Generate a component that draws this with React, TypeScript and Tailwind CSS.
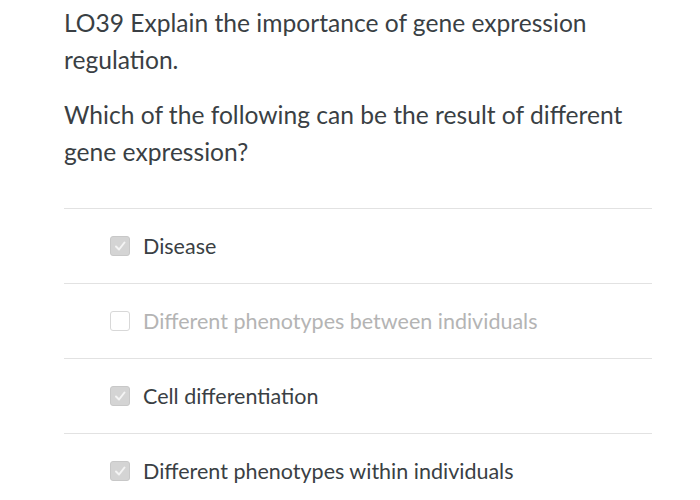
import React from "react";

const Check = ({ checked }: { checked: boolean }) => (
  <div
    className={
      checked
        ? "w-[20px] h-[20px] rounded-[3px] bg-[#d4d4d4] border border-[#c8c8c8] flex items-center justify-center"
        : "w-[20px] h-[20px] rounded-[3px] bg-white border border-[#d8d8d8]"
    }
  >
    {checked && (
      <svg width="14" height="14" viewBox="0 0 14 14">
        <path d="M3 7.5 L6 10.5 L11.5 3.5" fill="none" stroke="#f4f4f4" strokeWidth="2" strokeLinecap="round" strokeLinejoin="round" />
      </svg>
    )}
  </div>
);

const options = [
  { label: "Disease", checked: true },
  { label: "Different phenotypes between individuals", checked: false },
  { label: "Cell differentiation", checked: true },
  { label: "Different phenotypes within individuals", checked: true },
];

export default function App() {
  return (
    <div className="w-[700px] h-[500px] overflow-hidden bg-white" style={{ fontFamily: "Lato, 'Open Sans', sans-serif" }}>
      <div className="pl-[64px] pt-[4px] w-[652px]">
        <p className="text-[24.6px] leading-[37px] text-[#3a3f44]">
          LO39 Explain the importance of gene expression
          <br />
          regulation.
        </p>
        <p className="mt-[18px] text-[24.6px] leading-[37px] text-[#3a3f44]">
          Which of the following can be the result of different
          <br />
          gene expression?
        </p>
        <div className="mt-[38px]">
          {options.map((o) => (
            <div key={o.label} className="h-[75px] border-t border-[#e2e2e2] flex items-center pl-[46px] gap-[13px]">
              <Check checked={o.checked} />
              <span className={o.checked ? "text-[21.5px] text-[#3a3f44]" : "text-[21.5px] text-[#b4b4b4]"}>{o.label}</span>
            </div>
          ))}
        </div>
      </div>
    </div>
  );
}
